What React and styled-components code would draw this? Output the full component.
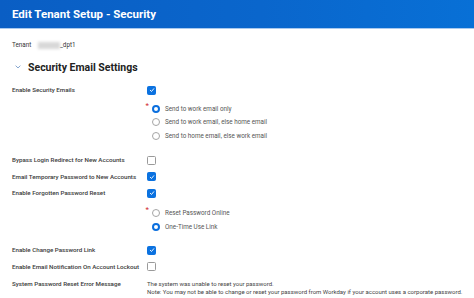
import React from 'react';
import styled, { createGlobalStyle } from 'styled-components';

const GlobalStyle = createGlobalStyle`
  html, body {
    margin: 0;
    padding: 0;
    background: #ffffff;
    font-family: Roboto, "Noto Sans", "Liberation Sans", sans-serif;
  }
`;

const Page = styled.div`
  width: 474px;
  height: 298px;
  overflow: hidden;
  background: #ffffff;
`;

const Header = styled.div`
  height: 28px;
  display: flex;
  align-items: center;
  padding-left: 12px;
  background: linear-gradient(90deg, #0a5ec4 0%, #0a66cc 55%, #0870d6 100%);
  border-bottom: 1px solid #a9c9ee;
`;

const Title = styled.h1`
  margin: 0;
  font-size: 11.5px;
  font-weight: 700;
  color: #ffffff;
`;

const Body = styled.div`
  padding: 0 12px;
`;

const TenantRow = styled.div`
  margin-top: 9px;
  height: 14px;
  display: flex;
  align-items: center;
  font-size: 6.3px;
  color: #333333;
`;

const TenantLabel = styled.span`
  width: 26px;
`;

const Blurred = styled.span`
  display: inline-block;
  width: 22px;
  height: 7px;
  background: #d8d8d8;
  filter: blur(1.5px);
`;

const SectionRow = styled.div`
  margin-top: 6px;
  height: 18px;
  display: flex;
  align-items: center;
  gap: 7px;
  padding-left: 3px;
`;

const SectionTitle = styled.h2`
  margin: 0;
  font-size: 10.5px;
  font-weight: 700;
  color: #222222;
`;

const Form = styled.div`
  margin-top: 6px;
`;

const Field = styled.div`
  display: grid;
  grid-template-columns: 135px 1fr;
  align-items: ${(p) => (p.$top ? 'start' : 'center')};
  height: ${(p) => p.$h}px;
  padding-top: ${(p) => p.$pt || 0}px;
  box-sizing: border-box;
`;

const Label = styled.div`
  font-size: 6.2px;
  line-height: 8px;
  font-weight: 500;
  color: #3a3a3a;
  white-space: nowrap;
`;

const Box = styled.span`
  width: 9px;
  height: 9px;
  box-sizing: border-box;
  border-radius: 1.5px;
  display: flex;
  align-items: center;
  justify-content: center;
  background: ${(p) => (p.$on ? '#0b72e0' : '#ffffff')};
  border: 1px solid ${(p) => (p.$on ? '#0b72e0' : '#9a9a9a')};
`;

const Group = styled.div`
  display: grid;
  grid-template-columns: 140px 1fr;
  padding-top: ${(p) => p.$pt}px;
  padding-bottom: ${(p) => p.$pb}px;
`;

const Required = styled.div`
  text-align: right;
  padding-right: 3px;
  color: #d0272f;
  font-size: 8px;
  line-height: 8px;
`;

const Options = styled.div`
  display: flex;
  flex-direction: column;
`;

const Option = styled.div`
  height: ${(p) => p.$h}px;
  display: flex;
  align-items: center;
  gap: 5px;
  font-size: 6.3px;
  color: #555555;
  white-space: nowrap;
`;

const Dot = styled.span`
  width: 8px;
  height: 8px;
  box-sizing: border-box;
  border-radius: 50%;
  background: #ffffff;
  border: ${(p) => (p.$on ? '2.4px solid #0b6fde' : '1px solid #a5a5a5')};
`;

const Message = styled.div`
  font-size: 6px;
  line-height: 8px;
  color: #444444;
  white-space: nowrap;
`;

const Check = ({ on }) => (
  <Box $on={on}>
    {on && (
      <svg width="6" height="6" viewBox="0 0 12 12">
        <path d="M2.5 6.5 L5 9 L9.5 3.5" fill="none" stroke="#ffffff" strokeWidth="1.8" strokeLinecap="round" strokeLinejoin="round" />
      </svg>
    )}
  </Box>
);

const Chevron = () => (
  <svg width="6" height="4" viewBox="0 0 10 6">
    <path d="M1.5 1.2 L5 4.6 L8.5 1.2" fill="none" stroke="#6f95c6" strokeWidth="1.4" strokeLinecap="round" />
  </svg>
);

const RadioGroup = ({ options, h, pt, pb }) => (
  <Group $pt={pt} $pb={pb}>
    <Required>*</Required>
    <Options>
      {options.map((o) => (
        <Option key={o.text} $h={h}>
          <Dot $on={o.on} />
          {o.text}
        </Option>
      ))}
    </Options>
  </Group>
);

export default function App() {
  return (
    <Page>
      <GlobalStyle />
      <Header>
        <Title>Edit Tenant Setup - Security</Title>
      </Header>
      <Body>
        <TenantRow>
          <TenantLabel>Tenant</TenantLabel>
          <Blurred />
          <span>_dpt1</span>
        </TenantRow>
        <SectionRow>
          <Chevron />
          <SectionTitle>Security Email Settings</SectionTitle>
        </SectionRow>
        <Form>
          <Field $h={16}>
            <Label>Enable Security Emails</Label>
            <Check on />
          </Field>
          <RadioGroup
            h={13.5}
            pt={4}
            pb={9.25}
            options={[
              { text: 'Send to work email only', on: true },
              { text: 'Send to work email, else home email' },
              { text: 'Send to home email, else work email' },
            ]}
          />
          <Field $h={16.5}>
            <Label>Bypass Login Redirect for New Accounts</Label>
            <Check />
          </Field>
          <Field $h={16.5}>
            <Label>Email Temporary Password to New Accounts</Label>
            <Check on />
          </Field>
          <Field $h={16.5}>
            <Label>Enable Forgotten Password Reset</Label>
            <Check on />
          </Field>
          <RadioGroup
            h={14}
            pt={4.75}
            pb={7.75}
            options={[
              { text: 'Reset Password Online' },
              { text: 'One-Time Use Link', on: true },
            ]}
          />
          <Field $h={16.5}>
            <Label>Enable Change Password Link</Label>
            <Check on />
          </Field>
          <Field $h={16.5}>
            <Label>Enable Email Notification On Account Lockout</Label>
            <Check />
          </Field>
          <Field $h={24} $pt={5} $top>
            <Label>System Password Reset Error Message</Label>
            <Message>
              The system was unable to reset your password.
              <br />
              Note: You may not be able to change or reset your password from Workday if your account uses a corporate password.
            </Message>
          </Field>
        </Form>
      </Body>
    </Page>
  );
}
